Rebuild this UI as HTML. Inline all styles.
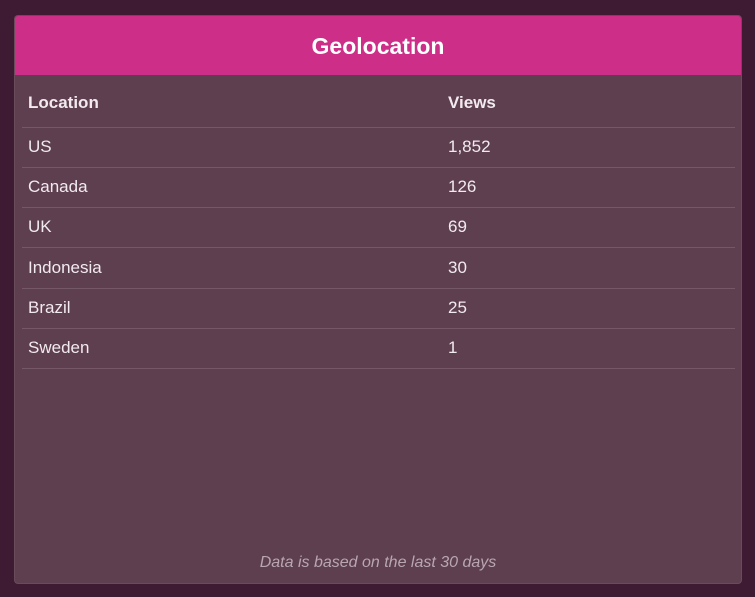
<!DOCTYPE html>
<html><head><style>
body{margin:0;width:755px;height:597px;background:#3e1a33;font-family:"Liberation Sans",sans-serif;position:relative;overflow:hidden}
.card{position:absolute;left:15px;top:16px;width:726px;height:567px;background:#5d3f4f;border-radius:3px;overflow:hidden;box-shadow:0 0 0 1px #6a4b5b}
.hd{height:59px;background:#cd2e87;color:#fff;font-weight:bold;font-size:23px;text-align:center;line-height:61px}
.row{position:absolute;left:7px;width:713px;height:40px;border-bottom:1px solid #745868;color:#f2eaee;font-size:17px}
.row span{position:absolute;top:10px}
.a{left:6px}.b{left:426px}
.th{font-weight:bold}
.th span{top:6px}
.ft{position:absolute;left:0;right:0;bottom:11px;text-align:center;font-style:italic;font-size:16px;color:#b9a6b0}
</style></head><body>
<div class="card">
<div class="hd">Geolocation</div>
<div class="row th" style="top:71px"><span class="a">Location</span><span class="b">Views</span></div>
<div class="row" style="top:111px"><span class="a">US</span><span class="b">1,852</span></div>
<div class="row" style="top:151px"><span class="a">Canada</span><span class="b">126</span></div>
<div class="row" style="top:191px"><span class="a">UK</span><span class="b">69</span></div>
<div class="row" style="top:232px"><span class="a">Indonesia</span><span class="b">30</span></div>
<div class="row" style="top:272px"><span class="a">Brazil</span><span class="b">25</span></div>
<div class="row" style="top:312px"><span class="a">Sweden</span><span class="b">1</span></div>
<div class="ft">Data is based on the last 30 days</div>
</div>
</body></html>
